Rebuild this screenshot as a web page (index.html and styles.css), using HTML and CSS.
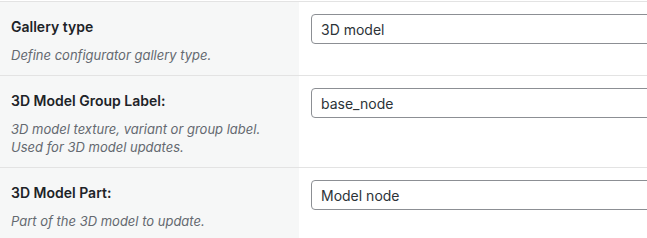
FILE: index.html
```html
<!DOCTYPE html>
<html>
  <head>
    <meta charset="utf-8">
    <title>Configurator settings</title>
    <link rel="stylesheet" href="styles.css">
  </head>
  <body>
    <div class="form-table">
      <div class="row">
        <div class="th">
          <label class="label">Gallery type</label>
          <p class="desc">Define configurator gallery type.</p>
        </div>
        <div class="td">
          <input class="field" type="text" value="3D model">
        </div>
      </div>
      <div class="row">
        <div class="th">
          <label class="label">3D Model Group Label:</label>
          <p class="desc">3D model texture, variant or group label.<br>Used for 3D model updates.</p>
        </div>
        <div class="td">
          <input class="field" type="text" value="base_node">
        </div>
      </div>
      <div class="row">
        <div class="th">
          <label class="label">3D Model Part:</label>
          <p class="desc">Part of the 3D model to update.</p>
        </div>
        <div class="td">
          <input class="field" type="text" value="Model node">
        </div>
      </div>
    </div>
  </body>
</html>
```

FILE: styles.css
```css
*{
  margin: 0;
  padding: 0;
  box-sizing: border-box;
}
body{
  background: #fff;
  font-family: Inter, "Liberation Sans", sans-serif;
  color: #1d2327;
}
.form-table{
  margin-top: 1px;
}
.row{
  display: grid;
  grid-template-columns: 299px 1fr;
  border-top: 1px solid #e3e3e3;
}
.th{
  background: #f6f7f7;
  padding: 16px 11px 11px 11px;
}
.label{
  display: block;
  font-size: 14px;
  font-weight: 600;
  line-height: 18px;
}
.desc{
  margin-top: 10px;
  font-size: 13px;
  font-style: italic;
  line-height: 18px;
  color: #646970;
}
.td{
  padding: 12px 0 12px 12px;
  overflow: hidden;
}
.field{
  display: block;
  width: 420px;
  height: 30px;
  padding: 0 9px;
  border: 1px solid #8c8f94;
  border-radius: 4px;
  font-family: inherit;
  font-size: 14px;
  color: #2c3338;
  background: #fff;
}
```
